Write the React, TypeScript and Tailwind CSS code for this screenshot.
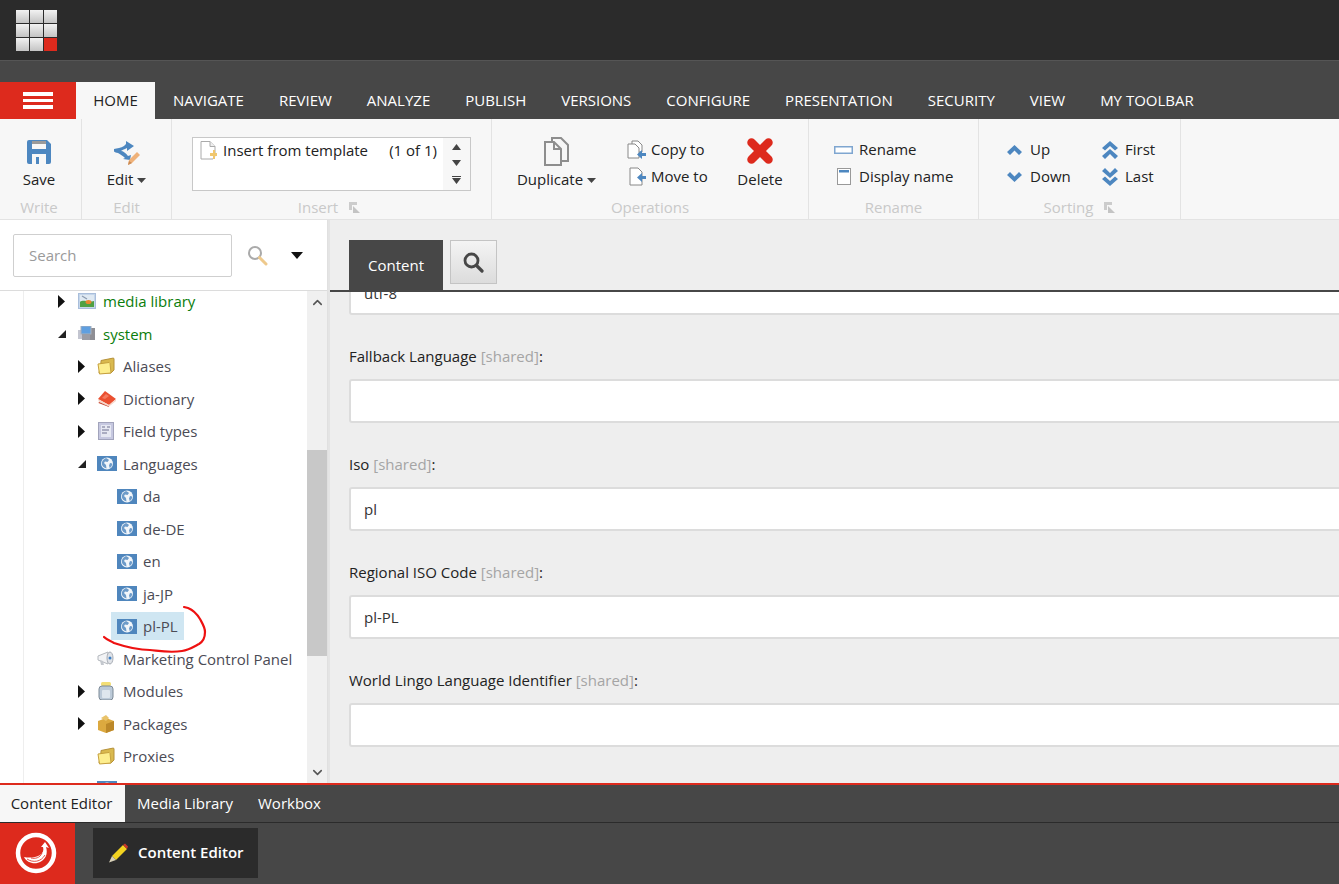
import { ChevronUp, ChevronDown } from "lucide-react";

const tabs = ["NAVIGATE", "REVIEW", "ANALYZE", "PUBLISH", "VERSIONS", "CONFIGURE", "PRESENTATION", "SECURITY", "VIEW", "MY TOOLBAR"];

const Caret = () => (
  <svg width="9" height="5" viewBox="0 0 9 5" className="inline-block ml-[4px] mt-[2px]"><path d="M0 0h9L4.500 5z" fill="#444" /></svg>
);

const Launcher = () => (
  <svg width="11" height="11" viewBox="0 0 11 11" className="ml-[11px]">
    <path d="M0 0h8v3H3v5H0z" fill="#ccc" />
    <path d="M4 4l7 7H4z" fill="#c4c4c4" />
  </svg>
);

const Globe = () => (
  <svg width="20" height="15" viewBox="0 0 20 15" className="-ml-[1px]">
    <rect width="20" height="15" fill="#4f86bd" />
    <circle cx="10" cy="7.500" r="6" fill="#f2f6fa" />
    <path d="M9 2c1.200.8 2.500 1 3 2l-1.500 2-2.500-.5-1 1.500 2 2 .5 3.500C7 12 4.800 10 4.800 7.500 4.800 5 6.500 3 9 2zM13 7l2.200.5c0 2-1 3.500-2.500 4.500l-.7-2.500z" fill="#6d9bc9" />
  </svg>
);

const Folder = () => (
  <svg width="18" height="18" viewBox="0 0 18 18" className="-ml-[1px]">
    <path d="M4 5V3.500L16.500 1l.5 1v11l-3 3H2z" fill="#d9b94e" stroke="#b6913a" />
    <path d="M1 7l11-1.500 1 1L14 16 2.500 17z" fill="#fdee8e" stroke="#c6a03e" />
  </svg>
);

const MediaIcon = () => (
  <svg width="18" height="16" viewBox="0 0 18 16">
    <rect x=".5" y=".5" width="17" height="15" fill="#c5d6ea" stroke="#a9bedb" />
    <rect x="2" y="2" width="14" height="6" fill="#dfe9f2" />
    <path d="M2 9c4-3 8 1 14-1v6H2z" fill="#4fa043" />
    <ellipse cx="10.500" cy="9" rx="3" ry="2" fill="#e8862e" />
    <path d="M4 3l5 3" stroke="#8c9bb0" strokeWidth="1.200" />
  </svg>
);

const SystemIcon = () => (
  <svg width="18" height="15" viewBox="0 0 18 15">
    <rect x="12" y="2" width="5" height="12" fill="#8e8e94" />
    <rect x="0" y="4" width="5" height="9" fill="#c3c5d0" />
    <rect x="3" y="0" width="10" height="8" fill="#5f9fe0" stroke="#a8b0bc" />
    <rect x="4" y="8" width="8" height="6" fill="#9b9da6" />
  </svg>
);

const BookIcon = () => (
  <svg width="18" height="16" viewBox="0 0 18 16">
    <path d="M0 8L7 0l11 8-7 6z" fill="#ea4f30" />
    <path d="M0 8l11 6 7-6v2l-7 5.500L1 11z" fill="#f6d5c8" />
    <path d="M1 11l10 4.500v.5L.5 12z" fill="#c03a22" />
    <path d="M4 7l4-4 3 2-4 3z" fill="#f57a5e" />
  </svg>
);

const FieldIcon = () => (
  <svg width="16" height="18" viewBox="0 0 16 18">
    <rect x=".5" y=".5" width="15" height="17" fill="#c6c8e0" stroke="#a2a4bc" />
    <rect x="3" y="3" width="10" height="12" fill="#e6e8f2" />
    <path d="M4 5h3M4 8h7M4 11h5M9 5h3" stroke="#6e7090" strokeWidth="1.200" />
  </svg>
);

const MarketingIcon = () => (
  <svg width="18" height="16" viewBox="0 0 18 16" className="-ml-[1px]">
    <path d="M1 5l10-4v12L1 9z" fill="#f2f3f5" stroke="#b4b8be" />
    <path d="M3 9l1 5h3l-1-4z" fill="#c4c8ce" />
    <ellipse cx="13" cy="7" rx="3" ry="6" fill="#e0e3e8" stroke="#a8adb5" />
    <circle cx="13" cy="7" r="1.500" fill="#3d7fc4" />
  </svg>
);

const JarIcon = () => (
  <svg width="16" height="18" viewBox="0 0 16 18">
    <rect x="3" y="0" width="10" height="4" rx="1.500" fill="#f3de76" />
    <rect x="1" y="4" width="14" height="14" rx="3" fill="#bccad8" stroke="#7d8a97" />
    <rect x="4" y="8" width="8" height="8" rx="1" fill="#dfe7ee" />
  </svg>
);

const PackageIcon = () => (
  <svg width="16" height="18" viewBox="0 0 16 18">
    <path d="M0 6l8-3 8 3v9l-8 3-8-3z" fill="#dca93f" />
    <path d="M8 9l8-3v9l-8 3z" fill="#bc8829" />
    <path d="M3 3l5-3 3 3-3 3z" fill="#e9c36a" />
  </svg>
);

const Arrow = ({ type }: { type?: string }) => {
  if (type === "open") {
    return <svg width="8" height="8" viewBox="0 0 8 8"><path d="M8 0v8H0z" fill="#222" /></svg>;
  }
  if (type === "closed") {
    return <svg width="7" height="13" viewBox="0 0 7 13"><path d="M0 0l7 6.500L0 13z" fill="#111" /></svg>;
  }
  return null;
};

const rows = [
  { name: "media library", icon: <MediaIcon />, pl: "pl-[34px]", arrow: "closed", green: true },
  { name: "system", icon: <SystemIcon />, pl: "pl-[34px]", arrow: "open", green: true },
  { name: "Aliases", icon: <Folder />, pl: "pl-[54px]", arrow: "closed" },
  { name: "Dictionary", icon: <BookIcon />, pl: "pl-[54px]", arrow: "closed" },
  { name: "Field types", icon: <FieldIcon />, pl: "pl-[54px]", arrow: "closed" },
  { name: "Languages", icon: <Globe />, pl: "pl-[54px]", arrow: "open" },
  { name: "da", icon: <Globe />, pl: "pl-[74px]" },
  { name: "de-DE", icon: <Globe />, pl: "pl-[74px]" },
  { name: "en", icon: <Globe />, pl: "pl-[74px]" },
  { name: "ja-JP", icon: <Globe />, pl: "pl-[74px]" },
  { name: "pl-PL", icon: <Globe />, pl: "pl-[74px]", selected: true },
  { name: "Marketing Control Panel", icon: <MarketingIcon />, pl: "pl-[54px]" },
  { name: "Modules", icon: <JarIcon />, pl: "pl-[54px]", arrow: "closed" },
  { name: "Packages", icon: <PackageIcon />, pl: "pl-[54px]", arrow: "closed" },
  { name: "Proxies", icon: <Folder />, pl: "pl-[54px]" },
  { name: "", icon: <Globe />, pl: "pl-[54px]" },
];

const fields = [
  { label: "Fallback Language", value: "" },
  { label: "Iso", value: "pl" },
  { label: "Regional ISO Code", value: "pl-PL" },
  { label: "World Lingo Language Identifier", value: "" },
];

const RibbonGroup = ({ label, width, launcher, labelClass, children }: { label: string; width: string; launcher?: boolean; labelClass?: string; children: React.ReactNode }) => (
  <div className={`${width} shrink-0 flex flex-col border-r border-[#e3e3e3]`}>
    <div className="h-[77px] flex">{children}</div>
    <div className={`h-[22px] flex items-center justify-center text-[15px] text-[#c9c9c9] ${labelClass ?? ""}`}>
      {label}
      {launcher && <Launcher />}
    </div>
  </div>
);

const SmallButton = ({ icon, text, iconW }: { icon: React.ReactNode; text: string; iconW: string }) => (
  <div className="h-[27px] flex items-center text-[15px] text-[#222] whitespace-nowrap">
    <div className={`${iconW} shrink-0 flex justify-center`}>{icon}</div>
    {text}
  </div>
);

const App = () => {
  return (
    <div className="h-[884px] w-full overflow-hidden flex flex-col bg-[#eeeeee] font-['Open_Sans',sans-serif] relative">
      {/* top bar */}
      <div className="h-[61px] shrink-0 bg-[#2b2b2b] border-b border-[#555] pl-[16px] pt-[10px]">
        <div className="grid grid-cols-3 w-[41px] gap-[1px]">
          {[0, 1, 2, 3, 4, 5, 6, 7].map((i) => (
            <div key={i} className="h-[13px] bg-gradient-to-b from-[#f2f2f2] to-[#c4c4c4]"></div>
          ))}
          <div className="h-[13px] bg-[#dd2a1d]"></div>
        </div>
      </div>
      <div className="h-[21px] shrink-0 bg-[#474747]"></div>

      {/* tabs */}
      <div className="h-[37px] shrink-0 bg-[#474747] flex items-stretch text-[15px] text-white">
        <div className="w-[76px] bg-[#dd2a1d] flex flex-col items-center justify-center gap-[3px]">
          <div className="w-[30px] h-[3.500px] bg-white"></div>
          <div className="w-[30px] h-[3.500px] bg-white"></div>
          <div className="w-[30px] h-[3.500px] bg-white"></div>
        </div>
        <div className="w-[79px] bg-[#f7f7f7] text-[#222] flex items-center justify-center">HOME</div>
        <div className="flex items-center pl-[18px] gap-[35px] whitespace-nowrap">
          {tabs.map((tab) => (
            <span key={tab}>{tab}</span>
          ))}
        </div>
      </div>

      {/* ribbon */}
      <div className="h-[101px] shrink-0 bg-[#f7f7f7] border-b border-[#e3e3e3] flex">
        <RibbonGroup label="Write" width="w-[82px] pr-[3px]">
          <div className="w-full flex flex-col items-center pt-[21px]">
            <svg width="24" height="24" viewBox="0 0 24 24">
              <path d="M2 0h18l4 4v18a2 2 0 0 1-2 2H2a2 2 0 0 1-2-2V2a2 2 0 0 1 2-2z" fill="#4d87c0" />
              <rect x="5" y="1" width="14" height="8" fill="#f7f7f7" />
              <rect x="5" y="1" width="14" height="3" fill="#9a9a9a" />
              <rect x="5" y="14" width="14" height="10" fill="#f7f7f7" />
              <rect x="9" y="17" width="3" height="7" fill="#4d87c0" />
            </svg>
            <div className="text-[15px] text-[#222] mt-[4px]">Save</div>
          </div>
        </RibbonGroup>
        <RibbonGroup label="Edit" width="w-[90px]">
          <div className="w-full flex flex-col items-center pt-[22px]">
            <svg width="28" height="26" viewBox="0 0 28 26">
              <path d="M1 8c3-1 7-1 10-3l2-2V0l8 5-7 5V7l-2 1c-2 1-3 1-4 2 2 0 5 2 7 5l3-1-1 5-7-1 2-1c-2-2-5-4-7-5-2 0-3-1-4-1.500z" fill="#4d87c0" />
              <path d="M15 24l1-5 8-8 3 3-8 8z" fill="#efb27a" />
              <path d="M16 20l3 2-4 2z" fill="#c98a54" />
            </svg>
            <div className="text-[15px] text-[#222] mt-[1px] flex items-center">Edit<Caret /></div>
          </div>
        </RibbonGroup>
        <RibbonGroup label="Insert" width="w-[320px]" launcher labelClass="pr-[5px]">
          <div className="ml-[20px] mt-[18px] w-[279px] h-[54px] border border-[#c8c8c8] bg-white flex">
            <div className="flex-1 flex text-[15px] text-[#222] pl-[7px] h-[24px] items-center justify-between pr-[6px]">
              <div className="flex items-center gap-[6px] whitespace-nowrap">
                <svg width="17" height="19" viewBox="0 0 17 19">
                  <path d="M1 .5h9l5 5V15l-2 3H1z" fill="#fff" stroke="#aaa" />
                  <path d="M10 .5v5h5" fill="#eee" stroke="#aaa" />
                  <path d="M10 12h3V9h2v3h2v3h-2v3h-2v-3h-3z" fill="#f0c76e" />
                </svg>
                Insert from template
              </div>
              <span className="whitespace-nowrap">(1 of 1)</span>
            </div>
            <div className="w-[27px] bg-[#f7f7f7] flex flex-col items-center justify-between py-[6px]">
              <svg width="9" height="6" viewBox="0 0 9 6"><path d="M0 6l4.500-6L9 6z" fill="#444" /></svg>
              <svg width="9" height="6" viewBox="0 0 9 6"><path d="M0 0l4.500 6L9 0z" fill="#444" /></svg>
              <svg width="9" height="8" viewBox="0 0 9 8"><path d="M0 0h9v1H0zM0 2h9L4.500 8z" fill="#444" /></svg>
            </div>
          </div>
        </RibbonGroup>
        <RibbonGroup label="Operations" width="w-[317px]">
          <div className="w-[129px] shrink-0 flex flex-col items-center pt-[18px]">
            <svg width="28" height="29" viewBox="0 0 28 29">
              <path d="M9 1h9l7 7v16H9z" fill="#f7f7f7" stroke="#8e8e8e" strokeWidth="2" />
              <path d="M2 5h9l7 7v16H2z" fill="#f7f7f7" stroke="#8e8e8e" strokeWidth="2" />
              <path d="M11 5v7h7" fill="none" stroke="#8e8e8e" strokeWidth="2" />
            </svg>
            <div className="text-[15px] text-[#222] mt-[2px] flex items-center whitespace-nowrap">Duplicate<Caret /></div>
          </div>
          <div className="w-[116px] pl-[5px] pt-[17px] shrink-0">
            <SmallButton text="Copy to" iconW="w-[20px] mr-[5px]" icon={
              <svg width="19" height="19" viewBox="0 0 19 19">
                <path d="M5 1h6l4 4v7H5z" fill="#fff" stroke="#888" />
                <path d="M1 4h7l4 4v10H1z" fill="#fff" stroke="#888" />
                <path d="M19 13v3h-4v3l-5-4.500 5-4.500v3z" fill="#4d87c0" />
              </svg>
            } />
            <SmallButton text="Move to" iconW="w-[20px] mr-[5px]" icon={
              <svg width="19" height="19" viewBox="0 0 19 19">
                <path d="M3 1h8l4 4v13H3z" fill="#fff" stroke="#888" />
                <path d="M19 9v3h-4v3l-5-4.500L15 6v3z" fill="#4d87c0" />
              </svg>
            } />
          </div>
          <div className="flex flex-col items-center pt-[18px] w-[46px] shrink-0">
            <svg width="28" height="28" viewBox="0 0 28 28">
              <path d="M5.500 5.500l17 17M22.500 5.500l-17 17" stroke="#dd2a1d" strokeWidth="8.500" strokeLinecap="round" />
            </svg>
            <div className="text-[15px] text-[#222] mt-[3px]">Delete</div>
          </div>
        </RibbonGroup>
        <RibbonGroup label="Rename" width="w-[170px]">
          <div className="pl-[25px] pt-[17px]">
            <SmallButton text="Rename" iconW="w-[19px] mr-[6px]" icon={
              <svg width="19" height="8" viewBox="0 0 19 8"><rect x=".75" y=".75" width="17.500" height="6.500" fill="#fff" stroke="#7fa6d0" strokeWidth="1.500" /></svg>
            } />
            <SmallButton text="Display name" iconW="w-[19px] mr-[6px]" icon={
              <svg width="14" height="17" viewBox="0 0 14 17">
                <rect x=".5" y=".5" width="13" height="16" fill="#fff" stroke="#999" />
                <rect x="2" y="2" width="10" height="2.500" fill="#4d87c0" />
              </svg>
            } />
          </div>
        </RibbonGroup>
        <RibbonGroup label="Sorting" width="w-[202px]" launcher>
          <div className="pl-[27px] pt-[17px] w-[123px]">
            <SmallButton text="Up" iconW="w-[16px] mr-[8px]" icon={
              <svg width="15" height="10" viewBox="0 0 15 10"><path d="M7.500 0L15 7l-3 3-4.500-4.500L3 10 0 7z" fill="#4d87c0" /></svg>
            } />
            <SmallButton text="Down" iconW="w-[16px] mr-[8px]" icon={
              <svg width="15" height="10" viewBox="0 0 15 10"><path d="M7.500 10L15 3l-3-3-4.500 4.500L3 0 0 3z" fill="#4d87c0" /></svg>
            } />
          </div>
          <div className="pt-[17px]">
            <SmallButton text="First" iconW="w-[16px] mr-[7px]" icon={
              <svg width="16" height="18" viewBox="0 0 16 18"><path d="M8 0l8 7-3 2.500-5-4.500-5 4.500L0 7zM8 8l8 7-3 3-5-5-5 5-3-3z" fill="#4d87c0" /></svg>
            } />
            <SmallButton text="Last" iconW="w-[16px] mr-[7px]" icon={
              <svg width="16" height="18" viewBox="0 0 16 18"><path d="M8 18l8-7-3-2.500-5 4.500-5-4.500L0 11zM8 10l8-7-3-3-5 5-5-5-3 3z" fill="#4d87c0" /></svg>
            } />
          </div>
        </RibbonGroup>
      </div>

      {/* main */}
      <div className="flex-1 min-h-0 flex">
        <div className="w-[328px] shrink-0 bg-white flex flex-col border-r border-[#e0e0e0]">
          <div className="h-[71px] shrink-0 border-b border-[#dcdcdc] flex items-center pl-[13px]">
            <div className="w-[219px] h-[43px] border border-[#cfcfcf] rounded-[2px] flex items-center pl-[15px] text-[15px] text-[#9a9a9a]">Search</div>
            <svg width="21" height="21" viewBox="0 0 21 21" className="ml-[15px]">
              <circle cx="8" cy="8" r="6" fill="#fff" stroke="#aaa" strokeWidth="2" />
              <path d="M12.500 12.500L19 19" stroke="#eec98c" strokeWidth="3" strokeLinecap="round" />
            </svg>
            <svg width="12" height="7" viewBox="0 0 12 7" className="ml-[23px]"><path d="M0 0h12L6 7z" fill="#111" /></svg>
          </div>
          <div className="flex-1 min-h-0 flex">
            <div className="flex-1 min-w-0 ml-[23px] border-l border-[#eeeeee] overflow-hidden">
              <div className="-mt-[6px]">
                {rows.map((row, i) => (
                  <div key={i} className={`h-[32.500px] flex items-center ${row.pl} text-[15px] whitespace-nowrap`}>
                    <div className="w-[20px] shrink-0 flex"><Arrow type={row.arrow} /></div>
                    <div className={row.selected ? "h-[28px] flex items-center bg-[#cfe6f2] -ml-[7px] pl-[7px] pr-[6px]" : "flex items-center"}>
                      <div className="w-[25px] shrink-0 flex">{row.icon}</div>
                      <span className={row.green ? "text-[#0b7d0b]" : "text-[#4b4b55]"}>{row.name}</span>
                    </div>
                  </div>
                ))}
              </div>
            </div>
            <div className="w-[20px] shrink-0 bg-[#f0f0f0] flex flex-col">
              <div className="h-[22px] flex items-center justify-center"><ChevronUp size={15} color="#555" strokeWidth={2.500} /></div>
              <div className="h-[137px]"></div>
              <div className="h-[206px] bg-[#c8c8c8]"></div>
              <div className="flex-1"></div>
              <div className="h-[22px] flex items-center justify-center"><ChevronDown size={15} color="#555" strokeWidth={2.500} /></div>
            </div>
          </div>
        </div>

        <div className="flex-1 min-w-0 flex flex-col border-l-2 border-[#e4e4e4] bg-[#eeeeee]">
          <div className="h-[72px] shrink-0 border-b-2 border-[#474747] flex items-start pl-[19px] pt-[20px] gap-[7px]">
            <div className="w-[94px] h-[50px] bg-[#474747] text-white text-[15px] flex items-center justify-center pt-[1px]">Content</div>
            <div className="w-[47px] h-[44px] border border-[#c4c4c4] bg-gradient-to-b from-[#f4f4f4] to-[#dcdcdc] flex items-center justify-center">
              <svg width="21" height="21" viewBox="0 0 21 21">
                <circle cx="8.500" cy="8.500" r="6.500" fill="none" stroke="#474747" strokeWidth="2.800" />
                <path d="M13.500 13.500L19 19" stroke="#474747" strokeWidth="3.200" strokeLinecap="round" />
              </svg>
            </div>
          </div>
          <div className="flex-1 min-h-0 overflow-hidden pl-[19px]">
            <div className="-mt-[21px] -mr-[10px]">
              <div className="h-[44px] border-2 border-[#dcdcdc] rounded-[3px] bg-white flex items-center pl-[13px] text-[15px] text-[#333]">utf-8</div>
              {fields.map((field) => (
                <div key={field.label}>
                  <div className="h-[20px] mt-[31px] mb-[13px] flex items-center text-[15px] text-[#222] whitespace-nowrap">
                    {field.label}&nbsp;<span className="text-[#a5a5a5]">[shared]</span>:
                  </div>
                  <div className="h-[44px] border-2 border-[#dcdcdc] rounded-[3px] bg-white flex items-center pl-[13px] text-[15px] text-[#333]">{field.value}</div>
                </div>
              ))}
            </div>
          </div>
        </div>
      </div>

      {/* task bar */}
      <div className="h-[40px] shrink-0 bg-[#474747] border-t-2 border-[#dd2a1d] border-b border-b-[#2b2b2b] flex text-[15px] text-white">
        <div className="w-[125px] bg-[#f7f7f7] text-[#222] flex items-center justify-center pr-[2px]">Content Editor</div>
        <div className="flex items-center pl-[12px] gap-[25px]">
          <span>Media Library</span>
          <span>Workbox</span>
        </div>
      </div>
      <div className="h-[61px] shrink-0 bg-[#474747] flex">
        <div className="w-[75px] bg-[#dd2a1d] flex items-center justify-center pr-[4px] pb-[2px]">
          <svg width="42" height="42" viewBox="0 0 42 42">
            <circle cx="21" cy="21" r="18" fill="none" stroke="#fff" strokeWidth="4.500" />
            <path d="M9 25c4 8 17 9 22-1 1-3 1-6 0-9l3 1-4-6-4 5 2 0c1 3 0 6-3 8-5 3-11 3-16 2z" fill="#fff" />
            <path d="M12 27c6 4 14 3 18-4M16 26c4 1 9 0 11-5" fill="none" stroke="#dd2a1d" strokeWidth=".8" />
          </svg>
        </div>
        <div className="ml-[18px] mt-[5px] w-[165px] h-[50px] bg-[#2b2b2b] flex items-center pl-[15px] pb-[2px] text-[15px] font-semibold text-white">
          <svg width="20" height="20" viewBox="0 0 20 20" className="mr-[10px] mt-[2px]">
            <path d="M4 13L15 2l4 4-11 11z" fill="#f3d320" />
            <path d="M15 2l2-1.500 3 3L19 6z" fill="#c8372a" />
            <path d="M4 13l4 4-7 2.500z" fill="#d8d0b8" />
          </svg>
          Content Editor
        </div>
      </div>

      {/* hand drawn circle around pl-PL */}
      <svg width="220" height="70" viewBox="100 600 220 70" className="absolute left-[100px] top-[600px] pointer-events-none">
        <path d="M104 637c3 3 7 4 10 6 12 4 24 7 36 7 10 1 20 3 32 1 7-1 13-5 17-7 5-3 6-7 6-12 0-5-3-9-5-13-3-5-7-9-12-11l-4-1" fill="none" stroke="#ee1111" strokeWidth="2.200" strokeLinecap="round" />
      </svg>
    </div>
  );
};

export default App;
